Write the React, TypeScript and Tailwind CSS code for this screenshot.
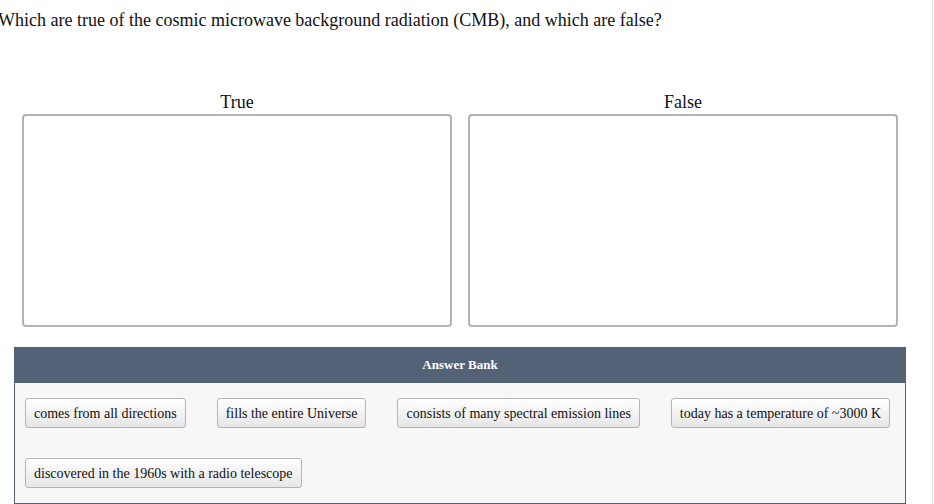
import React from 'react';

const chipsRow1 = [
  'comes from all directions',
  'fills the entire Universe',
  'consists of many spectral emission lines',
  'today has a temperature of ~3000 K',
];
const chipsRow2 = ['discovered in the 1960s with a radio telescope'];

// 可拖动的答案块
const Chip: React.FC<{ label: string }> = ({ label }) => (
  <div className="h-[30px] flex items-center pl-[8px] pr-[8px] rounded-[3px] border border-[#b4b4b4] bg-gradient-to-b from-white to-[#e6e6e6] text-[14px] text-[#111] whitespace-nowrap">
    {label}
  </div>
);

const DropZone: React.FC<{ title: string }> = ({ title }) => (
  <div className="w-[430px] flex flex-col items-center">
    <div className="h-[24px] text-[18px] leading-[24px] text-[#111]">{title}</div>
    <div className="w-full h-[213px] rounded-[4px] border-2 border-[#b3b3b3] bg-white" />
  </div>
);

const App: React.FC = () => {
  return (
    <div
      className="w-[933px] h-[504px] border-r border-[#e3e3e3] bg-white overflow-hidden"
      style={{ fontFamily: '"Liberation Serif", "Times New Roman", serif' }}
    >
      <p className="ml-[-2px] pt-[9px] text-[18px] leading-[22px] text-[#111]">
        Which are true of the cosmic microwave background radiation (CMB), and which are false?
      </p>

      <div className="mt-[59px] pl-[22px] flex gap-[16px]">
        <DropZone title="True" />
        <DropZone title="False" />
      </div>

      <div className="mt-[20px] ml-[14px] w-[892px]">
        <div className="h-[36px] bg-[#546278] flex items-center justify-center text-[13px] font-bold text-white">
          Answer Bank
        </div>
        <div className="h-[121px] bg-[#f7f7f7] border-x border-b border-[#546278] pl-[10px] pt-[15px] flex flex-col gap-[30px]">
          <div className="flex gap-[31px]">
            {chipsRow1.map((c) => (
              <Chip key={c} label={c} />
            ))}
          </div>
          <div className="flex gap-[31px]">
            {chipsRow2.map((c) => (
              <Chip key={c} label={c} />
            ))}
          </div>
        </div>
      </div>
    </div>
  );
};

export default App;
